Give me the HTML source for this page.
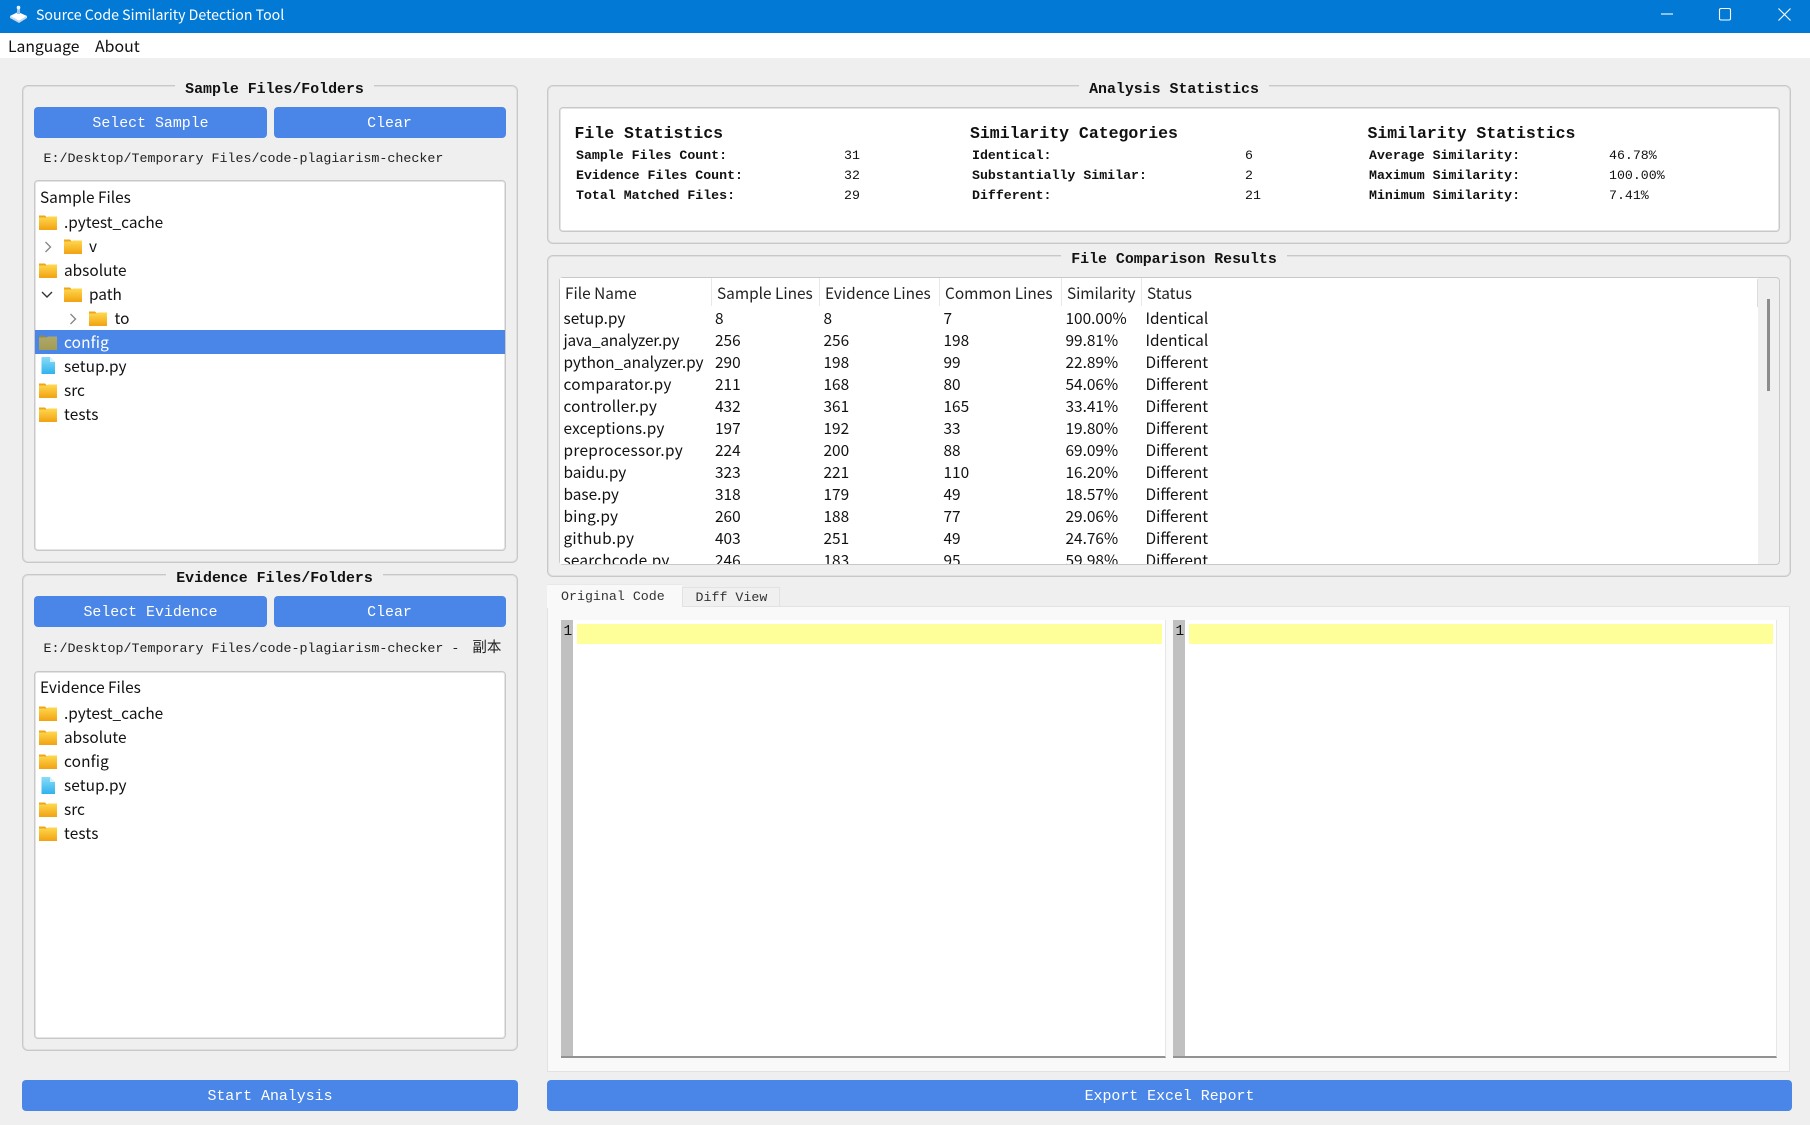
<!DOCTYPE html>
<html><head><meta charset="utf-8"><title>Source Code Similarity Detection Tool</title>
<style>
html,body{margin:0;padding:0;width:1810px;height:1125px;overflow:hidden;background:#efefef}
body{position:relative;font-family:"Noto Sans CJK SC","Liberation Sans",sans-serif;color:#111}
div,span,svg{position:absolute;box-sizing:border-box}
.t{white-space:nowrap;line-height:20px;height:20px;font-size:15.4px}
.m{font-family:"Liberation Mono","Noto Sans CJK SC",monospace;margin-top:1px}
.g{border:1px solid #c8c8c8;box-shadow:inset 0 0 0 1px #e0e0e0;border-radius:6px}
.gt{font-family:"Liberation Mono",monospace;font-weight:bold;font-size:14.9px;line-height:20px;height:20px;background:#efefef;text-align:center;color:#111;white-space:nowrap}
.b{background:#4a86e8;border-radius:4px;color:#fff;font-family:"Liberation Mono",monospace;font-size:14.9px;text-align:center;line-height:35px;height:31px}
.p{font-family:"Liberation Mono","Noto Sans CJK SC",monospace;font-size:13.33px;line-height:20px;height:20px;white-space:nowrap;color:#222;margin-top:1px}
.p em{font-style:normal;font-size:14.5px;margin-left:5px}
.w{background:#fff;border:1px solid #c8c8c8;box-shadow:inset 0 0 0 1px #e4e4e4;border-radius:4px}
.sh{font-family:"Liberation Mono",monospace;font-weight:bold;font-size:16.5px;line-height:20px;height:20px;white-space:nowrap;margin-top:1px}
.sl{font-family:"Liberation Mono",monospace;font-weight:bold;font-size:13.25px;line-height:20px;height:20px;white-space:nowrap;margin-top:1px}
.sv{font-family:"Liberation Mono",monospace;font-size:13.25px;line-height:20px;height:20px;white-space:nowrap;margin-top:1px}
.r{left:0;width:1200px;height:22px}
.r span{top:0;line-height:22px;white-space:nowrap;font-size:15.4px}
.r span:nth-child(1){left:3.5px}.r span:nth-child(2){left:155px}.r span:nth-child(3){left:263.5px}.r span:nth-child(4){left:383.5px}.r span:nth-child(5){left:505.5px}.r span:nth-child(6){left:585.5px}
.h{top:285px;line-height:16px;height:16px;font-size:15.4px;white-space:nowrap;color:#222}
.sep{top:278px;width:1px;height:28px;background:#e8e8e8}
</style></head>
<body>
<svg width="0" height="0" style="left:0;top:0">
<defs>
<linearGradient id="fg" x1="0" y1="0" x2="0" y2="1"><stop offset="0" stop-color="#ffd84f"/><stop offset="1" stop-color="#f2a212"/></linearGradient>
<linearGradient id="og" x1="0" y1="0" x2="0" y2="1"><stop offset="0" stop-color="#aea86a"/><stop offset="1" stop-color="#a39c52"/></linearGradient>
<linearGradient id="bg" x1="0" y1="0" x2="0" y2="1"><stop offset="0" stop-color="#8adcf6"/><stop offset="1" stop-color="#30b2ee"/></linearGradient>
<symbol id="folder" viewBox="0 0 18 15"><path d="M0 0.5H6L8 2.5H18V15H0Z" fill="#eda51c"/><path d="M0 2.5H7.5L9 1.5H18V15H0Z" fill="url(#fg)"/></symbol>
<symbol id="sfolder" viewBox="0 0 18 15"><path d="M0 0.5H6L8 2.5H18V15H0Z" fill="#8f8a50"/><path d="M0 2.5H7.5L9 1.5H18V15H0Z" fill="url(#og)"/></symbol>
<symbol id="file" viewBox="0 0 14 17"><path d="M0.5 0H9L14 5V17H0.5Z" fill="url(#bg)"/><path d="M9 0L14 5H9Z" fill="#d6f2fb"/></symbol>
</defs></svg>

<!-- title bar -->
<div style="left:0;top:0;width:1810px;height:33px;background:#0279d5"></div>
<svg style="left:9px;top:5px" width="20" height="19" viewBox="0 0 20 19"><path d="M1 11L9 7L18 11L10 16Z" fill="#fff"/><path d="M1 11V13L10 18L18 13V11L10 16Z" fill="#c5dcf2"/><path d="M8 1H11V9H8Z" fill="#9cc4ea"/><circle cx="9.5" cy="2.6" r="1.8" fill="#e8f2fb"/></svg>
<div class="t" style="left:36px;top:5px;color:#fff;font-size:14.15px">Source Code Similarity Detection Tool</div>
<svg style="left:1655px;top:4px" width="150" height="22" viewBox="0 0 150 22" fill="none" stroke="#fff" stroke-width="1.1"><path d="M6 10H18"/><rect x="64.5" y="4.5" width="11" height="11.5" rx="1.5"/><path d="M123.5 4.5L135.5 16.5M135.5 4.5L123.5 16.5"/></svg>
<!-- menu -->
<div style="left:0;top:33px;width:1810px;height:25px;background:#fff"></div>
<div class="t" style="left:8px;top:36px;font-size:15.7px">Language</div>
<div class="t" style="left:95px;top:36px;font-size:15.9px">About</div>

<!-- Sample group -->
<div class="g" style="left:22px;top:85px;width:496px;height:478px"></div>
<div class="gt" style="left:175px;top:80px;width:199px">Sample Files/Folders</div>
<div class="b" style="left:34px;top:107px;width:233px">Select Sample</div>
<div class="b" style="left:274px;top:107px;width:232px;text-indent:-1px">Clear</div>
<div class="p" style="left:43.5px;top:149px">E:/Desktop/Temporary Files/code-plagiarism-checker</div>
<div class="w" style="left:34px;top:180px;width:472px;height:371px"></div>
<div class="t" style="left:40px;top:187px">Sample Files</div>
<svg style="left:39px;top:215px" width="18" height="15"><use href="#folder"/></svg>
<div class="t" style="left:64px;top:212px">.pytest_cache</div>
<svg style="left:44px;top:241px" width="8" height="12" fill="none" stroke="#888" stroke-width="1.4"><path d="M1.5 1L6.5 6L1.5 11"/></svg>
<svg style="left:64px;top:239px" width="18" height="15"><use href="#folder"/></svg>
<div class="t" style="left:89px;top:236px">v</div>
<svg style="left:39px;top:263px" width="18" height="15"><use href="#folder"/></svg>
<div class="t" style="left:64px;top:260px">absolute</div>
<svg style="left:41px;top:291px" width="12" height="8" fill="none" stroke="#333" stroke-width="1.4"><path d="M1 1L6 6L11 1"/></svg>
<svg style="left:64px;top:287px" width="18" height="15"><use href="#folder"/></svg>
<div class="t" style="left:89px;top:284px">path</div>
<svg style="left:69px;top:313px" width="8" height="12" fill="none" stroke="#888" stroke-width="1.4"><path d="M1.5 1L6.5 6L1.5 11"/></svg>
<svg style="left:89px;top:311px" width="18" height="15"><use href="#folder"/></svg>
<div class="t" style="left:114.5px;top:308px">to</div>
<div style="left:35px;top:330px;width:470px;height:24px;background:#4a86e8"></div>
<svg style="left:39px;top:335px" width="18" height="15"><use href="#sfolder"/></svg>
<div class="t" style="left:64px;top:332px;color:#fff;letter-spacing:.15px">config</div>
<svg style="left:41px;top:357px" width="14" height="17"><use href="#file"/></svg>
<div class="t" style="left:64px;top:356px;letter-spacing:.1px">setup.py</div>
<svg style="left:39px;top:383px" width="18" height="15"><use href="#folder"/></svg>
<div class="t" style="left:64px;top:380px">src</div>
<svg style="left:39px;top:407px" width="18" height="15"><use href="#folder"/></svg>
<div class="t" style="left:64px;top:404px;letter-spacing:.15px">tests</div>

<!-- Evidence group -->
<div class="g" style="left:22px;top:574px;width:496px;height:477px"></div>
<div class="gt" style="left:166px;top:569px;width:217px">Evidence Files/Folders</div>
<div class="b" style="left:34px;top:596px;width:233px">Select Evidence</div>
<div class="b" style="left:274px;top:596px;width:232px;text-indent:-1px">Clear</div>
<div class="p" style="left:43.5px;top:638px">E:/Desktop/Temporary Files/code-plagiarism-checker - <em>副本</em></div>
<div class="w" style="left:34px;top:671px;width:472px;height:368px"></div>
<div class="t" style="left:40px;top:677px">Evidence Files</div>
<svg style="left:39px;top:706px" width="18" height="15"><use href="#folder"/></svg>
<div class="t" style="left:64px;top:703px">.pytest_cache</div>
<svg style="left:39px;top:730px" width="18" height="15"><use href="#folder"/></svg>
<div class="t" style="left:64px;top:727px">absolute</div>
<svg style="left:39px;top:754px" width="18" height="15"><use href="#folder"/></svg>
<div class="t" style="left:64px;top:751px;letter-spacing:.15px">config</div>
<svg style="left:41px;top:777px" width="14" height="17"><use href="#file"/></svg>
<div class="t" style="left:64px;top:775px;letter-spacing:.1px">setup.py</div>
<svg style="left:39px;top:802px" width="18" height="15"><use href="#folder"/></svg>
<div class="t" style="left:64px;top:799px">src</div>
<svg style="left:39px;top:826px" width="18" height="15"><use href="#folder"/></svg>
<div class="t" style="left:64px;top:823px;letter-spacing:.15px">tests</div>

<div class="b" style="left:22px;top:1080px;width:496px">Start Analysis</div>
<div class="b" style="left:547px;top:1080px;width:1245px">Export Excel Report</div>

<!-- Analysis statistics -->
<div class="g" style="left:547px;top:85px;width:1244px;height:159px"></div>
<div class="gt" style="left:1079px;top:80px;width:190px">Analysis Statistics</div>
<div class="w" style="left:559px;top:107px;width:1221px;height:125px"></div>
<div class="sh" style="left:574.5px;top:123px">File Statistics</div>
<div class="sl" style="left:576px;top:145px">Sample Files Count:</div><div class="sv" style="left:844px;top:145px">31</div>
<div class="sl" style="left:576px;top:165px">Evidence Files Count:</div><div class="sv" style="left:844px;top:165px">32</div>
<div class="sl" style="left:576px;top:185px">Total Matched Files:</div><div class="sv" style="left:844px;top:185px">29</div>
<div class="sh" style="left:970px;top:123px">Similarity Categories</div>
<div class="sl" style="left:972px;top:145px">Identical:</div><div class="sv" style="left:1245px;top:145px">6</div>
<div class="sl" style="left:972px;top:165px">Substantially Similar:</div><div class="sv" style="left:1245px;top:165px">2</div>
<div class="sl" style="left:972px;top:185px">Different:</div><div class="sv" style="left:1245px;top:185px">21</div>
<div class="sh" style="left:1367.5px;top:123px">Similarity Statistics</div>
<div class="sl" style="left:1369px;top:145px">Average Similarity:</div><div class="sv" style="left:1609px;top:145px">46.78%</div>
<div class="sl" style="left:1369px;top:165px">Maximum Similarity:</div><div class="sv" style="left:1609px;top:165px">100.00%</div>
<div class="sl" style="left:1369px;top:185px">Minimum Similarity:</div><div class="sv" style="left:1609px;top:185px">7.41%</div>

<!-- Results -->
<div class="g" style="left:547px;top:255px;width:1244px;height:322px"></div>
<div class="gt" style="left:1061px;top:250px;width:226px">File Comparison Results</div>
<div style="left:559px;top:277px;width:1221px;height:288px;background:#efefef;border:1px solid #c8c8c8;border-radius:4px"></div>
<div style="left:560px;top:278px;width:1198px;height:286px;background:#fff"></div>
<div style="left:1757px;top:279px;width:1px;height:28px;background:#dcdcdc"></div>
<div style="left:1767px;top:299px;width:3px;height:92px;background:#8c8c8c"></div>
<div class="sep" style="left:711px"></div><div class="sep" style="left:819px"></div><div class="sep" style="left:939px"></div><div class="sep" style="left:1061px"></div><div class="sep" style="left:1141px"></div>
<div class="h" style="left:565px">File Name</div><div class="h" style="left:717px">Sample Lines</div><div class="h" style="left:825px">Evidence Lines</div><div class="h" style="left:945px">Common Lines</div><div class="h" style="left:1067px;letter-spacing:-.05px">Similarity</div><div class="h" style="left:1147px">Status</div>
<div style="left:560px;top:307px;width:1197px;height:257px;overflow:hidden">
<div class="r" style="top:0"><span>setup.py</span><span>8</span><span>8</span><span>7</span><span>100.00%</span><span>Identical</span></div>
<div class="r" style="top:22px"><span style="letter-spacing:-.2px">java_analyzer.py</span><span>256</span><span>256</span><span>198</span><span>99.81%</span><span>Identical</span></div>
<div class="r" style="top:44px"><span style="letter-spacing:-.06px">python_analyzer.py</span><span>290</span><span>198</span><span>99</span><span>22.89%</span><span>Different</span></div>
<div class="r" style="top:66px"><span style="letter-spacing:.27px">comparator.py</span><span>211</span><span>168</span><span>80</span><span>54.06%</span><span>Different</span></div>
<div class="r" style="top:88px"><span style="letter-spacing:.18px">controller.py</span><span>432</span><span>361</span><span>165</span><span>33.41%</span><span>Different</span></div>
<div class="r" style="top:110px"><span style="letter-spacing:.18px">exceptions.py</span><span>197</span><span>192</span><span>33</span><span>19.80%</span><span>Different</span></div>
<div class="r" style="top:132px"><span style="letter-spacing:.3px">preprocessor.py</span><span>224</span><span>200</span><span>88</span><span>69.09%</span><span>Different</span></div>
<div class="r" style="top:154px"><span>baidu.py</span><span>323</span><span>221</span><span>110</span><span>16.20%</span><span>Different</span></div>
<div class="r" style="top:176px"><span>base.py</span><span>318</span><span>179</span><span>49</span><span>18.57%</span><span>Different</span></div>
<div class="r" style="top:198px"><span style="letter-spacing:.15px">bing.py</span><span>260</span><span>188</span><span>77</span><span>29.06%</span><span>Different</span></div>
<div class="r" style="top:220px"><span style="letter-spacing:.25px">github.py</span><span>403</span><span>251</span><span>49</span><span>24.76%</span><span>Different</span></div>
<div class="r" style="top:242px"><span style="letter-spacing:.18px">searchcode.py</span><span>246</span><span>183</span><span>95</span><span>59.98%</span><span>Different</span></div>
</div>

<!-- Tabs -->
<div style="left:547px;top:606px;width:1243px;height:466px;background:#f9f9f9;border:1px solid #e2e2e2"></div>
<div style="left:682px;top:587px;width:98px;height:20px;background:#f0f0f0;border:1px solid #e2e2e2"></div>
<div style="left:547px;top:584px;width:135px;height:24px;background:#f9f9f9;border-top:1px solid #e8e8e8"></div>
<div class="m" style="left:561px;top:586px;font-size:13.3px;line-height:20px;white-space:nowrap;color:#333">Original Code</div>
<div class="m" style="left:695.5px;top:587px;font-size:13.3px;line-height:20px;white-space:nowrap;color:#333">Diff View</div>

<!-- Editors -->
<div style="left:561px;top:620px;width:605px;height:438px;background:#fff;border-bottom:2px solid #929292;border-right:1px solid #e6e6e6"></div>
<div style="left:561px;top:620px;width:12px;height:436px;background:#c0c0c0"></div>
<div style="left:577px;top:624px;width:585px;height:20px;background:#ffff99"></div>
<div class="m" style="left:563.5px;top:621px;font-size:14.5px;line-height:20px">1</div>
<div style="left:1173px;top:620px;width:604px;height:438px;background:#fff;border-bottom:2px solid #929292;border-right:1px solid #e6e6e6"></div>
<div style="left:1173px;top:620px;width:12px;height:436px;background:#c0c0c0"></div>
<div style="left:1189px;top:624px;width:584px;height:20px;background:#ffff99"></div>
<div class="m" style="left:1175.5px;top:621px;font-size:14.5px;line-height:20px">1</div>
</body></html>
